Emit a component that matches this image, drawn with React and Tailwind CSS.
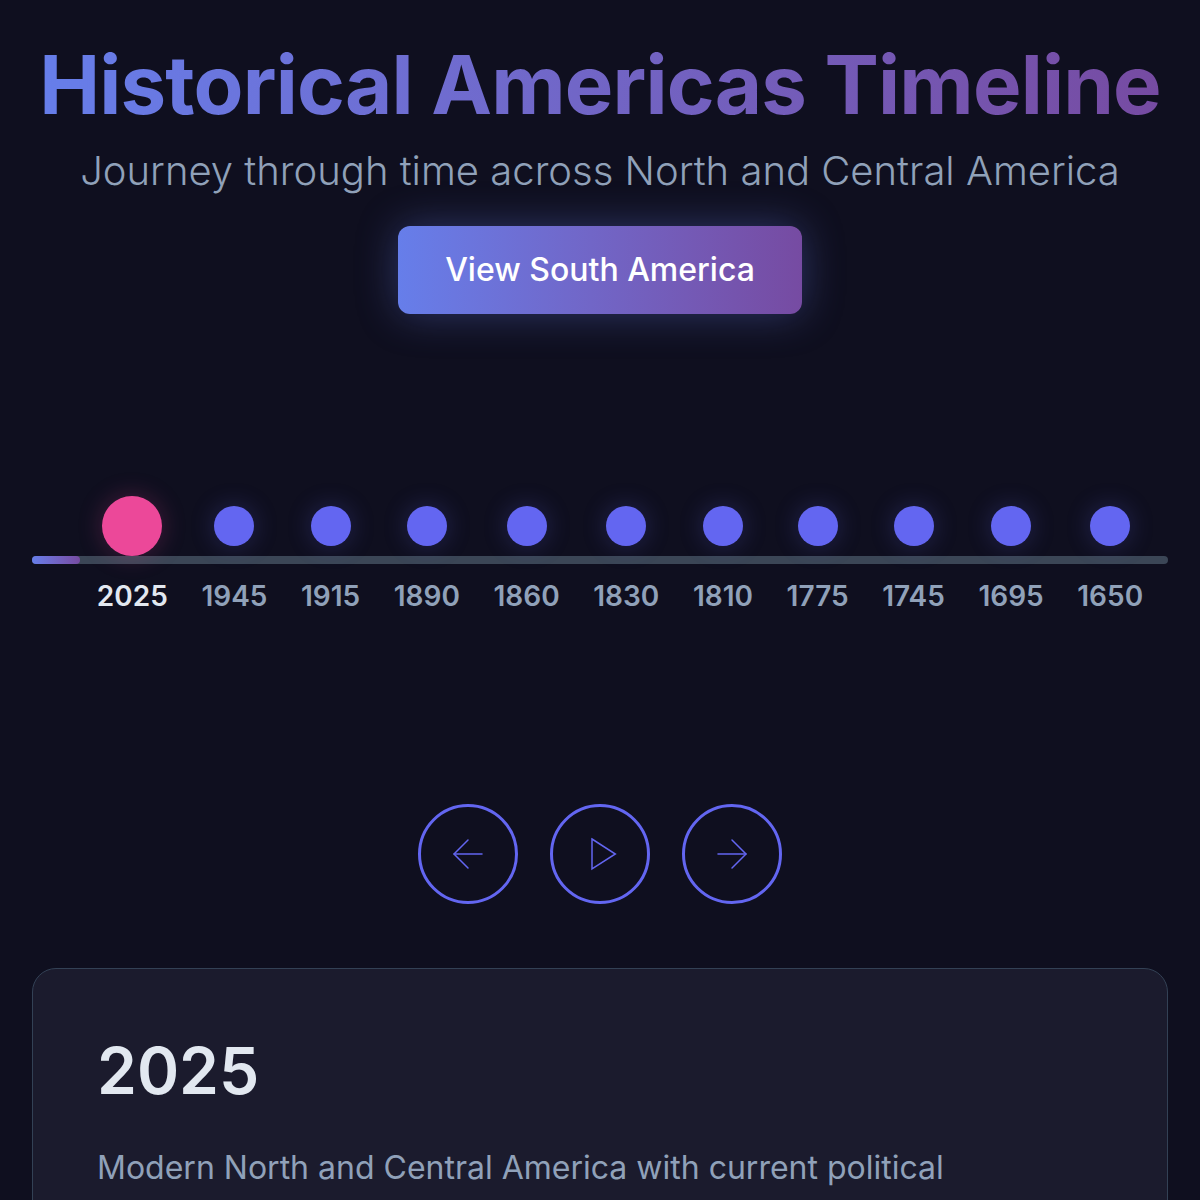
import { useState } from 'react';

const YEARS = ['2025', '1945', '1915', '1890', '1860', '1830', '1810', '1775', '1745', '1695', '1650'];

const EVENTS = {
    '2025': 'Modern North and Central America with current political boundaries and nations.',
};

const ArrowLeft = () => (
    <svg width="48" height="48" viewBox="0 0 24 24" fill="none" stroke="currentColor" strokeWidth="0.75" strokeLinecap="round" strokeLinejoin="round">
        <path d="M12 19l-7-7 7-7" />
        <path d="M19 12H5" />
    </svg>
);

const ArrowRight = () => (
    <svg width="48" height="48" viewBox="0 0 24 24" fill="none" stroke="currentColor" strokeWidth="0.75" strokeLinecap="round" strokeLinejoin="round">
        <path d="M5 12h14" />
        <path d="M12 5l7 7-7 7" />
    </svg>
);

const Play = () => (
    <svg width="40" height="40" viewBox="0 0 24 24" fill="none" stroke="currentColor" strokeWidth="0.9" strokeLinejoin="miter">
        <polygon points="6 3 20 12 6 21" />
    </svg>
);

export default function App() {
    const [active, setActive] = useState(0);
    const year = YEARS[active];

    return (
        <div className="min-h-screen bg-[#0f0f1f] text-slate-200 font-['Inter',_'Noto_Sans',_sans-serif] px-8 pt-[40px] pb-16">
            {/* Header */}
            <header className="flex flex-col items-center text-center">
                <h1 className="text-[81.5px] leading-[1.1] font-bold tracking-[-0.01em] bg-gradient-to-r from-[#667eea] to-[#764ba2] bg-clip-text text-transparent">
                    Historical Americas Timeline
                </h1>
                <p className="mt-[16px] text-[40px] leading-tight font-light text-slate-400">
                    Journey through time across North and Central America
                </p>
                <button className="mt-[30px] w-[404px] h-[88px] rounded-xl bg-gradient-to-r from-[#667eea] to-[#764ba2] text-white text-[32px] font-medium shadow-[0_0_40px_rgba(102,126,234,0.35)]">
                    View South America
                </button>
            </header>

            {/* Timeline */}
            <section className="relative mt-[182px]">
                <div className="absolute left-0 right-0 top-[60px] h-2 rounded-full bg-[#3b4656]">
                    <div className="h-2 w-12 rounded-full bg-gradient-to-r from-[#667eea] to-[#764ba2]" />
                </div>
                <div className="relative flex pl-[48px]">
                    {YEARS.map((y, i) => (
                        <button key={y} onClick={() => setActive(i)} className="flex flex-col items-center px-[16.8px]">
                            <div className="h-[60px] flex items-center justify-center">
                                {i === active ? (
                                    <div className="w-[60px] h-[60px] rounded-full bg-[#ec4899] shadow-[0_0_24px_rgba(236,72,153,0.25)]" />
                                ) : (
                                    <div className="w-10 h-10 rounded-full bg-[#6366f1] shadow-[0_0_24px_rgba(99,102,241,0.25)]" />
                                )}
                            </div>
                            <span className={`mt-[23px] text-[28px] leading-[34px] font-semibold ${i === active ? 'text-slate-200' : 'text-slate-400'}`}>
                                {y}
                            </span>
                        </button>
                    ))}
                </div>
            </section>

            {/* Controls */}
            <div className="mt-[191px] flex justify-center gap-8 text-[#6366f1]">
                <button className="w-[100px] h-[100px] rounded-full border-[3px] border-[#6366f1] flex items-center justify-center">
                    <ArrowLeft />
                </button>
                <button className="w-[100px] h-[100px] rounded-full border-[3px] border-[#6366f1] flex items-center justify-center pl-1">
                    <Play />
                </button>
                <button className="w-[100px] h-[100px] rounded-full border-[3px] border-[#6366f1] flex items-center justify-center">
                    <ArrowRight />
                </button>
            </div>

            {/* Detail card */}
            <div className="mt-16 rounded-3xl border border-[#334155] bg-[#1b1b2d] p-16">
                <h2 className="text-[64px] leading-[1.2] font-semibold text-slate-200">{year}</h2>
                <p className="mt-[33px] max-w-[900px] text-[32px] leading-[1.6] text-slate-400">
                    {EVENTS[year]}
                </p>
            </div>
        </div>
    );
}
